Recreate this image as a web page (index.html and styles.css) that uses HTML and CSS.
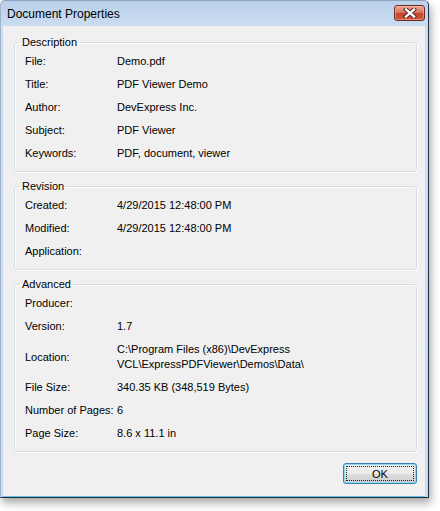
FILE: index.html
```html
<!DOCTYPE html>
<html>
<head>
<meta charset="utf-8">
<title>Document Properties</title>
<link rel="stylesheet" href="styles.css">
</head>
<body>
<div class="window">
  <div class="titlebar">
    <span class="title">Document Properties</span>
    <button class="close" aria-label="Close">
      <svg width="14" height="10" viewBox="0 0 14 10">
        <path d="M3 1.5 L11 8.5 M11 1.5 L3 8.5" stroke="#4a1a12" stroke-width="4.2" stroke-linecap="square"/>
        <path d="M3 1.5 L11 8.5 M11 1.5 L3 8.5" stroke="#ffffff" stroke-width="2.4" stroke-linecap="square"/>
      </svg>
    </button>
  </div>
  <div class="client">
    <fieldset class="group">
      <legend>Description</legend>
      <div class="row"><span class="label">File:</span><span class="value">Demo.pdf</span></div>
      <div class="row"><span class="label">Title:</span><span class="value">PDF Viewer Demo</span></div>
      <div class="row"><span class="label">Author:</span><span class="value">DevExpress Inc.</span></div>
      <div class="row"><span class="label">Subject:</span><span class="value">PDF Viewer</span></div>
      <div class="row"><span class="label">Keywords:</span><span class="value">PDF, document, viewer</span></div>
    </fieldset>
    <fieldset class="group">
      <legend>Revision</legend>
      <div class="row"><span class="label">Created:</span><span class="value">4/29/2015 12:48:00 PM</span></div>
      <div class="row"><span class="label">Modified:</span><span class="value">4/29/2015 12:48:00 PM</span></div>
      <div class="row"><span class="label">Application:</span><span class="value"></span></div>
    </fieldset>
    <fieldset class="group">
      <legend>Advanced</legend>
      <div class="row"><span class="label">Producer:</span><span class="value"></span></div>
      <div class="row"><span class="label">Version:</span><span class="value">1.7</span></div>
      <div class="row row-tall"><span class="label">Location:</span><span class="value multi">C:\Program Files (x86)\DevExpress<br>VCL\ExpressPDFViewer\Demos\Data\</span></div>
      <div class="row"><span class="label">File Size:</span><span class="value">340.35 KB (348,519 Bytes)</span></div>
      <div class="row"><span class="label">Number of Pages:</span><span class="value">6</span></div>
      <div class="row"><span class="label">Page Size:</span><span class="value">8.6 x 11.1 in</span></div>
    </fieldset>
    <div class="buttons">
      <button class="ok"><span class="focus">OK</span></button>
    </div>
  </div>
</div>
</body>
</html>
```
FILE: styles.css
```css
html, body {
  margin: 0;
  padding: 0;
  background: #ffffff;
}
body {
  width: 440px;
  height: 511px;
  overflow: hidden;
  font-family: "Liberation Sans", Arial, sans-serif;
  font-size: 11px;
  color: #000;
}
.window {
  box-sizing: border-box;
  width: 429px;
  height: 498px;
  display: flex;
  flex-direction: column;
  background: linear-gradient(#bad1ea, #cddef1 30px, #c9dbef);
  border-left: 1px solid #9fb3cb;
  border-right: 1px solid #1f3148;
  border-bottom: 1px solid #1b2a3d;
  border-top: 1px solid #8ea4bf;
  border-radius: 5px 5px 0 0;
  box-shadow: 2px 5px 8px rgba(0, 0, 0, 0.35);
}
.titlebar {
  height: 25px;
  flex: none;
  display: flex;
  align-items: flex-start;
  justify-content: space-between;
  padding-left: 6px;
  padding-right: 3px;
}
.title {
  font-size: 12px;
  line-height: 26px;
  color: #000;
}
.close {
  margin-top: 4px;
  width: 31px;
  height: 16px;
  padding: 0;
  border: 1px solid #6b2b22;
  border-radius: 3px;
  background: linear-gradient(#eaa594, #d8775f 45%, #c7432b 55%, #cc5a3e);
  box-shadow: inset 0 0 0 1px rgba(255, 200, 190, 0.45);
  display: flex;
  align-items: center;
  justify-content: center;
}
.client {
  flex: 1;
  margin: 0 3px 0 2px;
  background: #f0f0f0;
  border-bottom: 1px solid #6cc3e6;
  padding: 9px 8px 0 11px;
  display: flex;
  flex-direction: column;
}
.group {
  margin: 0 0 7px 0;
  padding: 1px 0 6px 0;
  border: 1px solid #d5dfe5;
  border-radius: 3px;
  box-shadow: inset 1px 1px 0 #ffffff, 1px 1px 0 #ffffff;
  min-width: 0;
}
.group legend {
  margin-left: 5px;
  padding: 0 2px;
  line-height: 14px;
  font-size: 11px;
}
.row {
  display: flex;
  height: 23px;
  line-height: 23px;
  padding-left: 10px;
}
.row-tall {
  height: 38px;
  align-items: center;
}
.label {
  width: 92px;
  flex: none;
  white-space: nowrap;
}
.value {
  white-space: nowrap;
}
.multi {
  line-height: 15px;
}
.buttons {
  display: flex;
  justify-content: flex-end;
  padding-top: 4px;
}
.ok {
  box-sizing: border-box;
  width: 74px;
  height: 21px;
  padding: 2px;
  border: 1px solid #3c7fb1;
  border-radius: 3px;
  background: linear-gradient(#f2f2f2, #ebebeb 50%, #dddddd 51%, #cfcfcf);
  box-shadow: inset 0 0 0 1px #8fd6f2;
  font-family: "Liberation Sans", Arial, sans-serif;
  font-size: 11px;
  color: #000;
  display: flex;
}
.focus {
  flex: 1;
  border: 1px dotted #202020;
  display: flex;
  align-items: center;
  justify-content: center;
}
```
